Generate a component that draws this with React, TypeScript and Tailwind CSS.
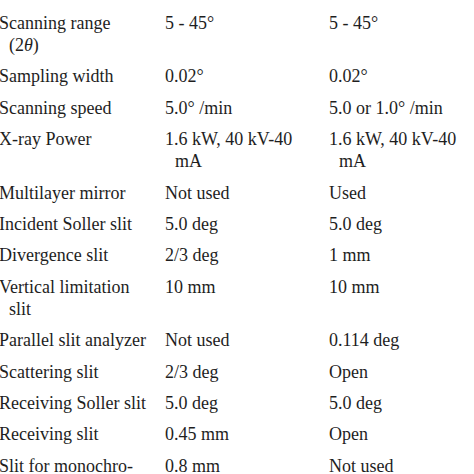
const ROWS: [React.ReactNode, string, string][] = [
  [<>Scanning range<br />(2<i>θ</i>)</>, "5 - 45°", "5 - 45°"],
  ["Sampling width", "0.02°", "0.02°"],
  ["Scanning speed", "5.0° /min", "5.0 or 1.0° /min"],
  ["X-ray Power", "1.6 kW, 40 kV-40 mA", "1.6 kW, 40 kV-40 mA"],
  ["Multilayer mirror", "Not used", "Used"],
  ["Incident Soller slit", "5.0 deg", "5.0 deg"],
  ["Divergence slit", "2/3 deg", "1 mm"],
  [<>Vertical limitation<br />slit</>, "10 mm", "10 mm"],
  ["Parallel slit analyzer", "Not used", "0.114 deg"],
  ["Scattering slit", "2/3 deg", "Open"],
  ["Receiving Soller slit", "5.0 deg", "5.0 deg"],
  ["Receiving slit", "0.45 mm", "Open"],
  [<>Slit for monochro-<br />mator</>, "0.8 mm", "Not used"],
];

export default function App() {
  return (
    <div className="w-[474px] h-[474px] overflow-hidden bg-white text-[#1e1e1e] text-[18px] leading-[22px] pt-[12px] font-['Liberation_Serif','DejaVu_Serif',serif]">
      <div className="grid grid-cols-[166px_164px_144px] ml-[-1px]">
        {ROWS.map(([a, b, c], i) => (
          <div key={i} className="contents">
            <div className="pl-[10px] -indent-[10px] pr-[8px] pb-[9.4px]">{a}</div>
            <div className="pl-[10px] -indent-[10px] pr-3 pb-[9.4px]">{b}</div>
            <div className="pl-[10px] -indent-[10px] pr-3 pb-[9.4px]">{c}</div>
          </div>
        ))}
      </div>
    </div>
  );
}
